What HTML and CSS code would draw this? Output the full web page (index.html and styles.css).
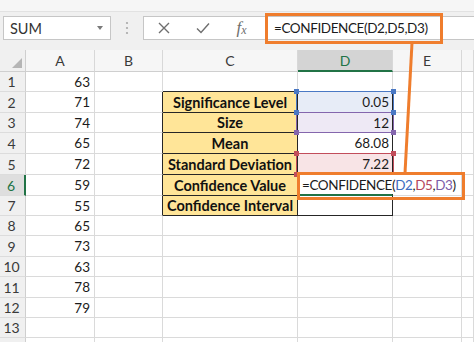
FILE: index.html
```
<!DOCTYPE html>
<html lang="en">
<head>
    <meta charset="UTF-8">
    <meta name="viewport" content="width=device-width, initial-scale=1.0">
    <title>CONFIDENCE function</title>
    <link rel="stylesheet" href="styles.css">
</head>
<body>
    <div class="topbar">
        <div class="namebox">
            <span>SUM</span>
            <span class="caret"></span>
        </div>
        <div class="grip">
            <svg width="4" height="14" viewBox="0 0 4 14"><circle cx="2" cy="2" r="1.1"/><circle cx="2" cy="7" r="1.1"/><circle cx="2" cy="12" r="1.1"/></svg>
        </div>
        <div class="fbar">
            <div class="fbtn">
                <svg width="12" height="12" viewBox="0 0 12 12"><path d="M1 1 L11 11 M11 1 L1 11"/></svg>
            </div>
            <div class="fbtn">
                <svg width="14" height="12" viewBox="0 0 14 12"><path d="M1 6.5 L5 10.5 L13 1.5"/></svg>
            </div>
            <div class="fbtn fx"><i>f</i><i class="x">x</i></div>
            <div class="finput">=CONFIDENCE(D2,D5,D3)</div>
        </div>
    </div>

    <div class="sheet">
        <div class="corner"></div>
        <div class="ch">A</div>
        <div class="ch">B</div>
        <div class="ch">C</div>
        <div class="ch sel">D</div>
        <div class="ch">E</div>
        <div class="ch"></div>

        <div class="rh">1</div>
        <div class="c num">63</div>
        <div class="c"></div>
        <div class="c eb"></div>
        <div class="c eb"></div>
        <div class="c"></div>
        <div class="c"></div>

        <div class="rh">2</div>
        <div class="c num">71</div>
        <div class="c er"></div>
        <div class="c lbl">Significance Level</div>
        <div class="c val hl hl-blue">0.05</div>
        <div class="c"></div>
        <div class="c"></div>

        <div class="rh">3</div>
        <div class="c num">74</div>
        <div class="c er"></div>
        <div class="c lbl">Size</div>
        <div class="c val hl hl-purple">12</div>
        <div class="c"></div>
        <div class="c"></div>

        <div class="rh">4</div>
        <div class="c num">65</div>
        <div class="c er"></div>
        <div class="c lbl">Mean</div>
        <div class="c val">68.08</div>
        <div class="c"></div>
        <div class="c"></div>

        <div class="rh">5</div>
        <div class="c num">72</div>
        <div class="c er"></div>
        <div class="c lbl">Standard Deviation</div>
        <div class="c val hl hl-red">7.22</div>
        <div class="c"></div>
        <div class="c"></div>

        <div class="rh sel">6</div>
        <div class="c num">59</div>
        <div class="c er"></div>
        <div class="c lbl">Confidence Value</div>
        <div class="c val active">
            <span class="editor">=CONFIDENCE(<span class="ref-blue">D2</span>,<span class="ref-red">D5</span>,<span class="ref-purple">D3</span>)</span>
        </div>
        <div class="c"></div>
        <div class="c"></div>

        <div class="rh">7</div>
        <div class="c num">55</div>
        <div class="c er"></div>
        <div class="c lbl">Confidence Interval</div>
        <div class="c val"></div>
        <div class="c"></div>
        <div class="c"></div>

        <div class="rh">8</div>
        <div class="c num">65</div>
        <div class="c"></div>
        <div class="c"></div>
        <div class="c"></div>
        <div class="c"></div>
        <div class="c"></div>

        <div class="rh">9</div>
        <div class="c num">73</div>
        <div class="c"></div>
        <div class="c"></div>
        <div class="c"></div>
        <div class="c"></div>
        <div class="c"></div>

        <div class="rh">10</div>
        <div class="c num">63</div>
        <div class="c"></div>
        <div class="c"></div>
        <div class="c"></div>
        <div class="c"></div>
        <div class="c"></div>

        <div class="rh">11</div>
        <div class="c num">78</div>
        <div class="c"></div>
        <div class="c"></div>
        <div class="c"></div>
        <div class="c"></div>
        <div class="c"></div>

        <div class="rh">12</div>
        <div class="c num">79</div>
        <div class="c"></div>
        <div class="c"></div>
        <div class="c"></div>
        <div class="c"></div>
        <div class="c"></div>

        <div class="rh">13</div>
        <div class="c"></div>
        <div class="c"></div>
        <div class="c"></div>
        <div class="c"></div>
        <div class="c"></div>
        <div class="c"></div>

        <div class="rh"></div>
        <div class="c"></div>
        <div class="c"></div>
        <div class="c"></div>
        <div class="c"></div>
        <div class="c"></div>
        <div class="c"></div>
    </div>

    <!-- orange callout drawn over the screenshot -->
    <svg class="callout" width="474" height="342" viewBox="0 0 474 342">
        <rect x="266.5" y="14.5" width="175" height="28"/>
        <path d="M412 43 L405 173"/>
        <rect x="298.5" y="173.5" width="165" height="25"/>
    </svg>
</body>
</html>
```

FILE: styles.css
```
body {
    margin: 0;
    width: 474px;
    height: 342px;
    overflow: hidden;
    position: relative;
    font-family: Lato, "Open Sans", sans-serif;
    background: #fff;
    color: #1b1b1b;
}
.topbar {
    height: 50px;
    box-sizing: border-box;
    padding-top: 16px;
    display: flex;
    align-items: flex-start;
    background: linear-gradient(#f6f6f6 0, #f6f6f6 11px, #e2e2e2 11px, #e2e2e2 12px, #f0f0f0 12px);
}
.namebox {
    margin-left: 3px;
    width: 108px;
    height: 24px;
    box-sizing: border-box;
    border: 1px solid #c6c6c6;
    background: #fff;
    display: flex;
    align-items: center;
    justify-content: space-between;
    padding: 0 7px 0 6px;
    font-size: 14.5px;
    color: #333;
}
.caret {
    width: 0;
    height: 0;
    border-left: 3.5px solid transparent;
    border-right: 3.5px solid transparent;
    border-top: 4px solid #7a7a7a;
}
.grip {
    width: 32px;
    height: 24px;
    display: flex;
    align-items: center;
    justify-content: center;
}
.grip svg {
    fill: #a9a9a9;
}
.fbar {
    flex: 1;
    height: 24px;
    box-sizing: border-box;
    border: 1px solid #c6c6c6;
    border-right: none;
    background: #fff;
    display: flex;
    align-items: center;
}
.fbtn {
    width: 39px;
    height: 100%;
    display: flex;
    align-items: center;
    justify-content: center;
}
.fbtn svg {
    fill: none;
    stroke: #6e6e6e;
    stroke-width: 1.4;
}
.fx {
    font-family: "Liberation Serif", serif;
    font-size: 17px;
    color: #6e6e6e;
}
.fx .x {
    font-size: 12px;
    margin-top: 5px;
}
.finput {
    padding-left: 13px;
    font-size: 13.5px;
    letter-spacing: -0.4px;
    white-space: nowrap;
    color: #1b1b1b;
}

.sheet {
    display: grid;
    grid-template-columns: 26px 69px 68px 135px 95px 69px 1fr;
    grid-template-rows: 22px 20px 21px 20px 21px 21px 21px 20px 20px 21px 20px 21px 20px 20px 20px;
    font-size: 13.5px;
}
.corner {
    position: relative;
    background: #f0f0f0;
    border-right: 1px solid #cfcfcf;
    border-bottom: 1px solid #cfcfcf;
}
.corner::after {
    content: '';
    position: absolute;
    right: 3px;
    bottom: 3px;
    width: 0;
    height: 0;
    border-left: 10px solid transparent;
    border-bottom: 10px solid #b5b5b5;
}
.ch {
    background: #f6f6f6;
    border-right: 1px solid #d8d8d8;
    border-bottom: 1px solid #cfcfcf;
    display: flex;
    align-items: center;
    justify-content: center;
    font-size: 14px;
    color: #3a3a3a;
}
.ch.sel {
    background: #d4d4d4;
    border-bottom: 2px solid #217346;
    color: #217346;
}
.rh {
    background: #f0f0f0;
    border-right: 1px solid #cfcfcf;
    border-bottom: 1px solid #dcdcdc;
    display: flex;
    align-items: center;
    justify-content: center;
    font-size: 14px;
    color: #3a3a3a;
    padding-right: 2px;
}
.rh.sel {
    background: #dedede;
    border-right: 2px solid #217346;
    color: #217346;
}
.c {
    border-right: 1px solid #dadada;
    border-bottom: 1px solid #dadada;
    display: flex;
    align-items: center;
    padding: 0 4px;
    white-space: nowrap;
    position: relative;
}
.num {
    justify-content: flex-end;
}
.er {
    border-right-color: #262626;
}
.eb {
    border-bottom-color: #262626;
}
.lbl {
    background: #ffe598;
    border-color: #262626;
    justify-content: center;
    font-weight: bold;
    font-size: 14.5px;
    color: #111;
    padding: 0;
}
.val {
    border-color: #262626;
    justify-content: flex-end;
    padding-right: 3px;
}
.hl::before {
    content: '';
    position: absolute;
    left: -2px;
    top: -1px;
    right: -2px;
    bottom: -1px;
    border: 1px solid var(--hl);
    pointer-events: none;
}
.hl::after {
    content: '';
    position: absolute;
    left: -4px;
    top: -3px;
    right: -4px;
    bottom: -3px;
    z-index: 2;
    background:
        linear-gradient(var(--hl), var(--hl)) left top / 5px 5px no-repeat,
        linear-gradient(var(--hl), var(--hl)) right top / 5px 5px no-repeat,
        linear-gradient(var(--hl), var(--hl)) left bottom / 5px 5px no-repeat,
        linear-gradient(var(--hl), var(--hl)) right bottom / 5px 5px no-repeat;
}
.hl-blue {
    --hl: #4a78c4;
    background: #e7ecf7;
}
.hl-purple {
    --hl: #8466ad;
    background: #eee9f5;
    z-index: 1;
}
.hl-red {
    --hl: #c24d5b;
    background: #f8e4e6;
}
.active {
    border-bottom: 2px solid #217346;
    z-index: 3;
}
.editor {
    position: absolute;
    left: 0;
    top: 0;
    bottom: 0;
    padding: 0 4px;
    display: flex;
    align-items: center;
    background: #fff;
    font-size: 13.5px;
    letter-spacing: -0.4px;
    white-space: nowrap;
}
.ref-blue {
    color: #3d6cc0;
}
.ref-red {
    color: #b5475e;
}
.ref-purple {
    color: #7c5ca8;
}
.callout {
    position: absolute;
    left: 0;
    top: 0;
    z-index: 5;
    fill: none;
    stroke: #ef7d2d;
    stroke-width: 3;
}
```
